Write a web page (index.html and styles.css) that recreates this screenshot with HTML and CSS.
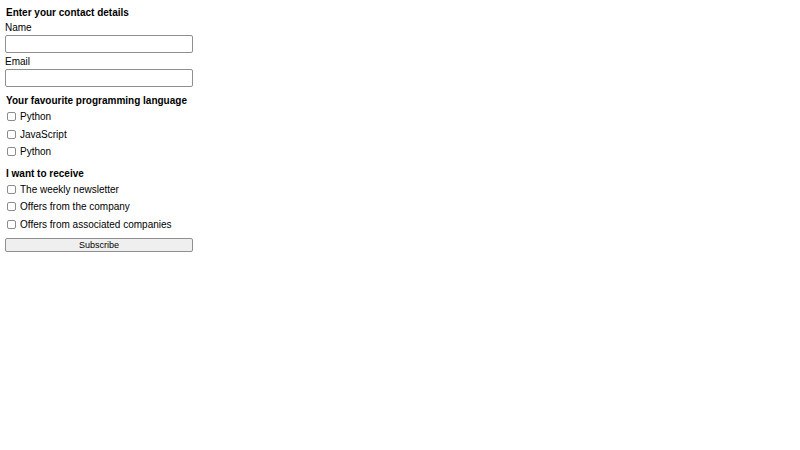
FILE: index.html
```html
<!DOCTYPE html>
<html>
<head>
<meta charset="utf-8">
<title>Subscribe</title>
<link rel="stylesheet" href="styles.css">
</head>
<body>
<form class="SubscribeForm">
  <div class="FormGroup ContactGroup">
    <div class="GroupTitle">Enter your contact details</div>
    <label class="FieldLabel" for="name">Name</label>
    <input class="TextField" type="text" id="name">
    <label class="FieldLabel" for="email">Email</label>
    <input class="TextField" type="text" id="email">
  </div>

  <div class="FormGroup">
    <div class="GroupTitle">Your favourite programming language</div>
    <label class="CheckRow"><input type="checkbox"> Python</label>
    <label class="CheckRow"><input type="checkbox"> JavaScript</label>
    <label class="CheckRow"><input type="checkbox"> Python</label>
  </div>

  <div class="FormGroup">
    <div class="GroupTitle">I want to receive</div>
    <label class="CheckRow"><input type="checkbox"> The weekly newsletter</label>
    <label class="CheckRow"><input type="checkbox"> Offers from the company</label>
    <label class="CheckRow"><input type="checkbox"> Offers from associated companies</label>
  </div>

  <input class="SubmitButton" type="button" value="Subscribe">
</form>
</body>
</html>
```

FILE: styles.css
```css
body {margin:5px;background-color:#ffffff;font-family:"Liberation Sans", Arial, sans-serif;font-size:10px;color:#000000;}

.SubscribeForm {width:188px;}

.FormGroup {margin-bottom:5px;}
.FormGroup.ContactGroup {margin-bottom:6px;}

.GroupTitle {
  font-weight:bold;
  line-height:15px;
  padding-left:1px;
  white-space:nowrap;
}

.FieldLabel {
  display:block;
  line-height:14px;
  margin-top:1px;
}

.TextField {
  display:block;
  box-sizing:border-box;
  width:188px;
  height:18px;
  margin:0 0 2px 0;
  padding:1px 2px;
  border:1px solid #8f8f8f;
  border-radius:2px;
  font-family:inherit;
  font-size:10px;
}

.CheckRow {
  display:flex;
  align-items:center;
  height:17.5px;
  white-space:nowrap;
}

.CheckRow input {
  appearance:none;
  -webkit-appearance:none;
  box-sizing:border-box;
  width:9px;
  height:9px;
  margin:0 4px 0 2px;
  border:1px solid #8c8c8c;
  border-radius:2px;
  background-color:#ffffff;
}

.CheckRow input:checked {
  background-color:#0075ff;
  border-color:#0075ff;
}

.SubmitButton {
  display:block;
  box-sizing:border-box;
  width:188px;
  height:14px;
  margin:0;
  padding:0;
  border:1px solid #8f8f8f;
  border-radius:2px;
  background-color:#efefef;
  font-family:inherit;
  font-size:9px;
  line-height:12px;
}
```
